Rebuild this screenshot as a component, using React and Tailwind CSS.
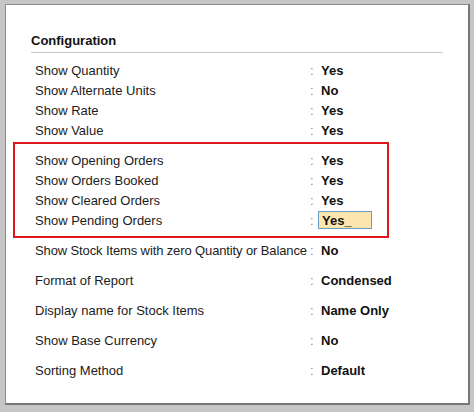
const topRows = [
    {label: "Show Quantity", value: "Yes"},
    {label: "Show Alternate Units", value: "No"},
    {label: "Show Rate", value: "Yes"},
    {label: "Show Value", value: "Yes"},
];

const orderRows = [
    {label: "Show Opening Orders", value: "Yes"},
    {label: "Show Orders Booked", value: "Yes"},
    {label: "Show Cleared Orders", value: "Yes"},
    {label: "Show Pending Orders", value: "Yes", active: true},
];

const bottomRows = [
    {label: "Show Stock Items with zero Quantity or Balance", value: "No", tight: true},
    {label: "Format of Report", value: "Condensed"},
    {label: "Display name for Stock Items", value: "Name Only"},
    {label: "Show Base Currency", value: "No"},
    {label: "Sorting Method", value: "Default"},
];

const Row = ({label, value, active, tight}) => (
    <div className="flex items-center h-[20px] text-[13px] leading-none">
        <span
            className={
                tight
                    ? "w-[275px] text-[#1c1c1c] whitespace-nowrap tracking-[-0.12px]"
                    : "w-[275px] text-[#1c1c1c] whitespace-nowrap"
            }
        >
            {label}
        </span>
        <span className="w-[4px] text-[#8a8a8a]">:</span>
        {active ? (
            <span className="ml-[4px] flex items-center w-[54px] h-[18px] pl-[3px] bg-[#fde6ae] border border-[#6d9ec2] font-bold text-[#111]">
                Yes<span className="font-bold">_</span>
            </span>
        ) : (
            <span className="ml-[7px] font-bold text-[#111]">{value}</span>
        )}
    </div>
);

const App = () => {
    return (
        <div
            className="w-[474px] h-[412px] bg-[#c6c6c6] pt-[4px] pl-[5px] pr-[4px] pb-[7px]"
            style={{fontFamily: '"Liberation Sans", Arial, sans-serif'}}
        >
            <div className="h-full bg-white border border-[#8c8c8c] border-r-[2px] border-b-[2px] border-r-[#777] border-b-[#777]">
                {/* Heading */}
                <div className="mx-[25px] mt-[24px] h-[24px] flex items-center border-b border-[#c8c8c8] text-[13px] font-bold text-[#111]">
                    Configuration
                </div>

                <div className="mt-[7px] pl-[29px]">
                    {topRows.map((row) => (
                        <Row key={row.label} {...row}/>
                    ))}
                </div>

                {/* Highlighted order options */}
                <div className="ml-[7px] w-[376px] mt-[2px] border-2 border-[#e0141e] py-[6px] pl-[20px]">
                    {orderRows.map((row) => (
                        <Row key={row.label} {...row}/>
                    ))}
                </div>

                <div className="mt-[2px] pl-[29px] flex flex-col gap-[10px]">
                    {bottomRows.map((row) => (
                        <Row key={row.label} {...row}/>
                    ))}
                </div>
            </div>
        </div>
    );
};

export default App;
